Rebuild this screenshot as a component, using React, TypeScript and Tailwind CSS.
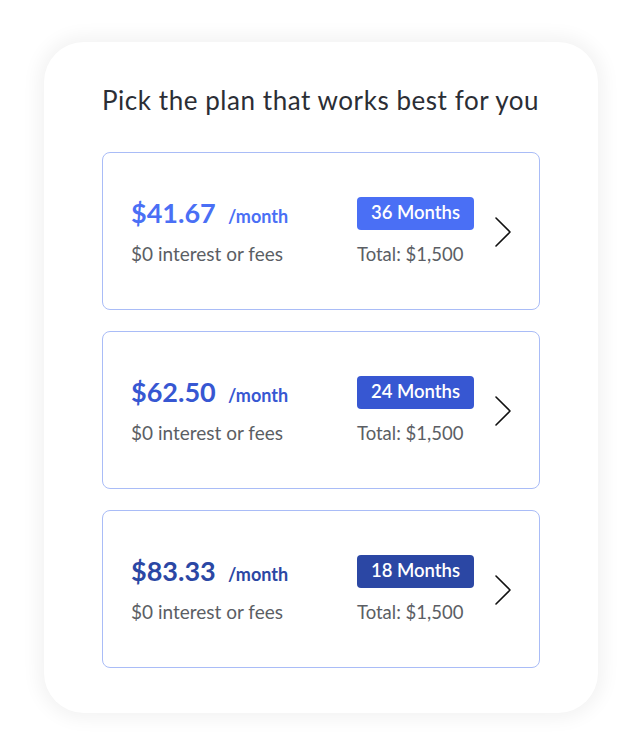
import React from "react";

const plans = [
  { price: "$41.67", months: "36 Months", color: "text-[#4a6ff5]", bg: "bg-[#4a6ff5]" },
  { price: "$62.50", months: "24 Months", color: "text-[#3757d2]", bg: "bg-[#3757d2]" },
  { price: "$83.33", months: "18 Months", color: "text-[#2b47a4]", bg: "bg-[#2b47a4]" },
];

function Chevron() {
  return (
    <svg width="20" height="32" viewBox="0 0 20 32" fill="none">
      <path d="M3 2 L17 16 L3 30" stroke="#111" strokeWidth="1.6" strokeLinecap="round" strokeLinejoin="round" />
    </svg>
  );
}

export default function App() {
  return (
    <div className="min-h-[755px] w-[640px] bg-white pt-[42px] pl-[44px]" style={{ fontFamily: "Lato, 'Noto Sans', sans-serif" }}>
      <div className="w-[554px] h-[671px] rounded-[40px] bg-white shadow-[0_0_18px_6px_rgba(0,0,0,0.05)] px-[58px] pt-[42px]">
        <h1 className="text-[26px] leading-[32px] text-[#2b2e35] font-normal tracking-[0.55px] whitespace-nowrap">Pick the plan that works best for you</h1>
        <div className="mt-[36px] flex flex-col gap-[21px]">
          {plans.map((p) => (
            <div key={p.months} className="h-[158px] rounded-[8px] border border-[#a9bcf7] flex items-center pl-[28px]">
              <div className="flex-1">
                <div className="flex items-baseline">
                  <span className={`w-[97px] text-[27px] font-bold leading-[34px] ${p.color}`}>{p.price}</span>
                  <span className={`text-[18px] font-bold ${p.color}`}>/month</span>
                </div>
                <div className="mt-[12px] text-[19px] leading-[24px] text-[#5b5e64]">$0 interest or fees</div>
              </div>
              <div className="w-[117px]">
                <div className={`h-[33px] rounded-[4px] ${p.bg} text-white text-[18.5px] font-semibold flex items-center justify-center`}>{p.months}</div>
                <div className="mt-[12px] text-[18.5px] leading-[24px] text-[#5b5e64]">Total: $1,500</div>
              </div>
              <div className="ml-[19px] mr-[26px] mt-[2px]">
                <Chevron />
              </div>
            </div>
          ))}
        </div>
      </div>
    </div>
  );
}
